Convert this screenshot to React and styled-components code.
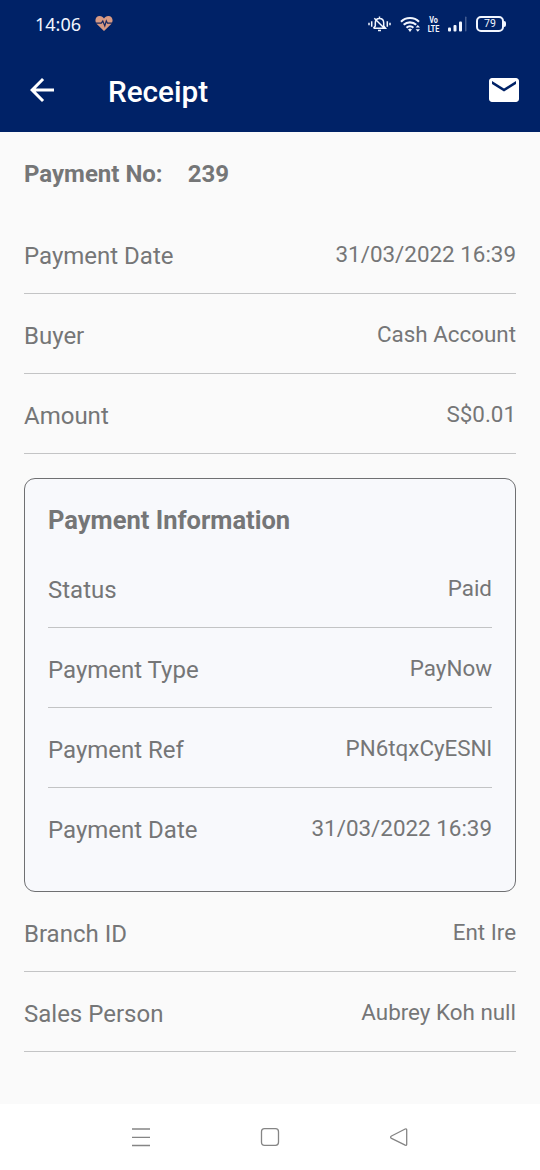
import * as React from "react"
import styled, { createGlobalStyle } from "styled-components"

const GlobalStyle = createGlobalStyle`
  * {
    box-sizing: border-box;
  }
  body {
    margin: 0;
    background: #fafafa;
    font-family: Roboto, "Liberation Sans", sans-serif;
    color: #757677;
  }
  svg {
    display: block;
    flex-shrink: 0;
  }
`
const StyledScreen = styled.div`
  display: flex;
  flex-direction: column;
  width: 540px;
  height: 1170px;
  overflow: hidden;
`
const StyledStatusBar = styled.div`
  display: flex;
  justify-content: space-between;
  align-items: center;
  height: 48px;
  padding: 0 34px 0 35px;
  background: #002267;
  color: #f2f6ff;
`
const StyledClock = styled.div`
  display: flex;
  align-items: center;
  gap: 14px;
  font-family: "Noto Sans", sans-serif;
  font-size: 18px;
  line-height: 24px;
  svg {
    margin-top: -2px;
  }
`
const StyledIndicators = styled.div`
  display: flex;
  align-items: center;
  gap: 9px;
`
const StyledVolte = styled.div`
  display: flex;
  flex-direction: column;
  align-items: center;
  width: 11px;
  margin: 0 -1px 0 -2px;
  font-size: 9.5px;
  font-weight: 700;
  transform: scaleX(0.76);
  span {
    height: 9px;
    line-height: 9px;
  }
`
const StyledBattery = styled.div`
  display: flex;
  align-items: center;
  .level {
    width: 28px;
    height: 16px;
    border: 2px solid #f2f6ff;
    border-radius: 5px;
    font-size: 10.5px;
    line-height: 12.5px;
    text-align: center;
  }
  .tip {
    width: 2px;
    height: 6px;
    border-radius: 0 2px 2px 0;
    background: #f2f6ff;
  }
`
const StyledAppBar = styled.header`
  display: flex;
  align-items: center;
  height: 84px;
  padding: 0 18px 0 24px;
  background: #002267;
  color: #fff;
  h1 {
    flex-grow: 1;
    margin: 3px 0 0 48px;
    font-size: 29.7px;
    font-weight: 500;
    line-height: 36px;
  }
`
const StyledContent = styled.main`
  flex-grow: 1;
  padding: 0 24px;
`
const StyledNumber = styled.div`
  display: flex;
  gap: 25px;
  height: 82px;
  padding-top: 27px;
  font-size: 24px;
  font-weight: 700;
  line-height: 30px;
`
const StyledRow = styled.div`
  display: flex;
  justify-content: space-between;
  height: 80px;
  padding-top: 26px;
  border-bottom: 1px solid ${props => (props.$last ? "transparent" : "#c3c4c5")};
  line-height: 30px;
  .label {
    margin-top: 1px;
    font-size: 24px;
  }
  .value {
    margin-top: -1px;
    font-size: 22.4px;
  }
`
const StyledCard = styled.section`
  height: 414px;
  margin: 24px 0 0;
  padding: 0 23px;
  border: 1px solid #6f7072;
  border-radius: 11px;
  background: #f8f9fc;
  h2 {
    height: 69px;
    margin: 0;
    padding-top: 26px;
    font-size: 25.5px;
    font-weight: 700;
    line-height: 30px;
  }
`
const StyledNav = styled.nav`
  display: flex;
  justify-content: space-between;
  height: 66px;
  padding: 22px 129px 0;
  background: #fff;
`

const Row = ({ label, value, last }) => (
  <StyledRow $last={last}>
    <span className="label">{label}</span>
    <span className="value">{value}</span>
  </StyledRow>
)

const HeartIcon = () => (
  <svg width="18" height="17" viewBox="0 0 18 17">
    <path
      d="M9 16 2 9.2C-.9 6.2.3 1 4.7 1 6.7 1 8 2 9 3.4 10 2 11.3 1 13.3 1 17.7 1 18.9 6.2 16 9.2Z"
      fill="#d99a83"
    />
    <path
      d="M1 8.2h5.3L7.8 6l2 5 1.5-5.2 1.2 2.4H17"
      fill="none"
      stroke="#17275f"
      strokeWidth="1.2"
    />
  </svg>
)

const MutedBellIcon = () => (
  <svg width="23" height="18" viewBox="0 0 23 18" fill="none" stroke="#f2f6ff" strokeWidth="1.5">
    <path d="M5.5 13.3h12l-1.8-2.3V8c0-2.6-1.6-4.4-4.2-4.4S7.3 5.4 7.300 8v3l-1.800 2.300M11.500 1.600v2M10 15.600h3M6.300 3.200l10 10" />
    <path d="M1 7.700v2.600M3.700 6.300v5.400M19.300 6.300v5.400M22 7.700v2.600" />
  </svg>
)

const WifiIcon = () => (
  <svg width="21" height="17" viewBox="0 0 21 17" fill="none" stroke="#f2f6ff">
    <path d="M1 5.7c4.8-4.9 13.2-4.9 18 0M3.7 8.8c3.5-3.3 9-3.3 12.5 0M6.5 11.7c2-1.9 4.9-1.9 6.9 0" strokeWidth="2.1" />
    <path d="m8 13.3 2-.9 2 .9-2 2.7Z" fill="#f2f6ff" stroke="none" />
    <path d="m15.6 11.6 2.2-2.6 2.2 2.6ZM15.6 13.2l2.2 2.6 2.2-2.6Z" fill="#f2f6ff" stroke="none" />
  </svg>
)

const SignalIcon = () => (
  <svg width="20" height="18" viewBox="0 0 20 18" fill="#f2f6ff">
    <rect x="1" y="12.5" width="3" height="4" rx="1" />
    <rect x="6.5" y="10" width="3" height="6.5" rx="1" />
    <rect x="12" y="6.5" width="3" height="10" rx="1" />
    <rect x="18" y="1.5" width="1.5" height="15" rx=".7" opacity=".28" />
  </svg>
)

const BackIcon = () => (
  <svg width="36" height="36" viewBox="0 0 24 24" fill="#fff">
    <path d="M20 11H7.83l5.59-5.59L12 4l-8 8 8 8 1.41-1.41L7.83 13H20v-2z" />
  </svg>
)

const MailIcon = () => (
  <svg width="36" height="36" viewBox="0 0 24 24" fill="#fff">
    <path d="M20 4H4c-1.1 0-1.99.9-1.99 2L2 18c0 1.1.9 2 2 2h16c1.1 0 2-.9 2-2V6c0-1.1-.9-2-2-2zm0 4l-8 5-8-5V6l8 5 8-5v2z" />
  </svg>
)

const NavIcon = ({ d }) => (
  <svg width="24" height="22" viewBox="0 0 24 22" fill="none" stroke="#858585" strokeWidth="1.3" strokeLinejoin="round">
    <path d={d} />
  </svg>
)

const App = () => {
  return (
    <>
      <GlobalStyle />
      <StyledScreen>
        <StyledStatusBar>
          <StyledClock>
            <span>14:06</span>
            <HeartIcon />
          </StyledClock>
          <StyledIndicators>
            <MutedBellIcon />
            <WifiIcon />
            <StyledVolte>
              <span>Vo</span>
              <span>LTE</span>
            </StyledVolte>
            <SignalIcon />
            <StyledBattery>
              <div className="level">79</div>
              <div className="tip" />
            </StyledBattery>
          </StyledIndicators>
        </StyledStatusBar>

        <StyledAppBar>
          <BackIcon />
          <h1>Receipt</h1>
          <MailIcon />
        </StyledAppBar>

        <StyledContent>
          <StyledNumber>
            <span>Payment No:</span>
            <span>239</span>
          </StyledNumber>
          <Row label="Payment Date" value="31/03/2022 16:39" />
          <Row label="Buyer" value="Cash Account" />
          <Row label="Amount" value="S$0.01" />
          <StyledCard>
            <h2>Payment Information</h2>
            <Row label="Status" value="Paid" />
            <Row label="Payment Type" value="PayNow" />
            <Row label="Payment Ref" value="PN6tqxCyESNl" />
            <Row label="Payment Date" value="31/03/2022 16:39" last />
          </StyledCard>
          <Row label="Branch ID" value="Ent Ire" />
          <Row label="Sales Person" value="Aubrey Koh null" />
        </StyledContent>

        <StyledNav>
          <NavIcon d="M3 3h18M3 11.3h18M3 19.5h18" />
          <NavIcon d="M6.5 2.7h11q3 0 3 3v10.6q0 3-3 3h-11q-3 0-3-3V5.7q0-3 3-3Z" />
          <NavIcon d="M18.2 3 4.5 10q-1.8 1.2 0 2.4l13.7 6.8q1.5.5 1.5-1V4q0-1.5-1.5-1Z" />
        </StyledNav>
      </StyledScreen>
    </>
  )
}

export default App
